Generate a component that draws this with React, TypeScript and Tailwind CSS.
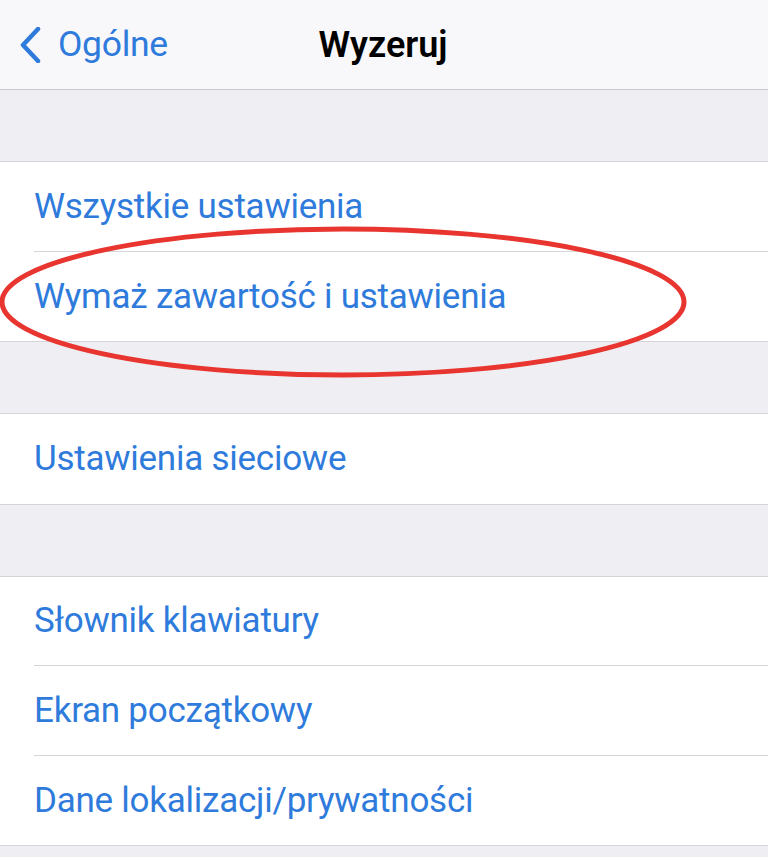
import React from "react";

const font = { fontFamily: "Roboto, 'Noto Sans', 'Liberation Sans', sans-serif" };

function Row({ label, last }: { label: string; last?: boolean }) {
  return (
    <div className="h-[89.5px] flex flex-col bg-white">
      <div className="flex-1 flex items-center pl-[34px]">
        <span className="text-[35px] text-[#2f7bdc] leading-none tracking-[-0.25px]">{label}</span>
      </div>
      {!last && <div className="ml-[34px] h-[1px] bg-[#d6d6da]" />}
    </div>
  );
}

function Group({ items }: { items: string[] }) {
  return (
    <div className="border-y border-[#d4d4d8] bg-white">
      {items.map((t, i) => (
        <Row key={t} label={t} last={i === items.length - 1} />
      ))}
    </div>
  );
}

export default function App() {
  return (
    <div className="relative w-[768px] h-[857px] overflow-hidden bg-[#efeef3]" style={font}>
      <div className="h-[90px] bg-[#f8f8fa] border-b border-[#c9c9cd] flex items-center relative">
        <div className="flex items-center pl-[18px] text-[#2f7bdc]">
          <svg width="24" height="36" viewBox="0 0 24 36" className="mr-[16px]">
            <path d="M20 2 L5 18 L20 34" fill="none" stroke="#2f7bdc" strokeWidth="4.5" strokeLinecap="round" strokeLinejoin="round" />
          </svg>
          <span className="text-[35.5px] leading-none tracking-[-0.3px]">Ogólne</span>
        </div>
        <div className="absolute left-0 right-0 top-0 bottom-0 flex items-center justify-center pointer-events-none">
          <span className="text-[36px] font-semibold text-black leading-none -translate-x-[1px]">Wyzeruj</span>
        </div>
      </div>
      <div className="h-[71px]" />
      <Group items={["Wszystkie ustawienia", "Wymaż zawartość i ustawienia"]} />
      <div className="h-[71px]" />
      <Group items={["Ustawienia sieciowe"]} />
      <div className="h-[71px]" />
      <Group items={["Słownik klawiatury", "Ekran początkowy", "Dane lokalizacji/prywatności"]} />
      <svg className="absolute left-0 top-0 pointer-events-none" width="768" height="857">
        <ellipse cx="343" cy="302" rx="341" ry="73" fill="none" stroke="#e8352f" strokeWidth="5" />
      </svg>
    </div>
  );
}
